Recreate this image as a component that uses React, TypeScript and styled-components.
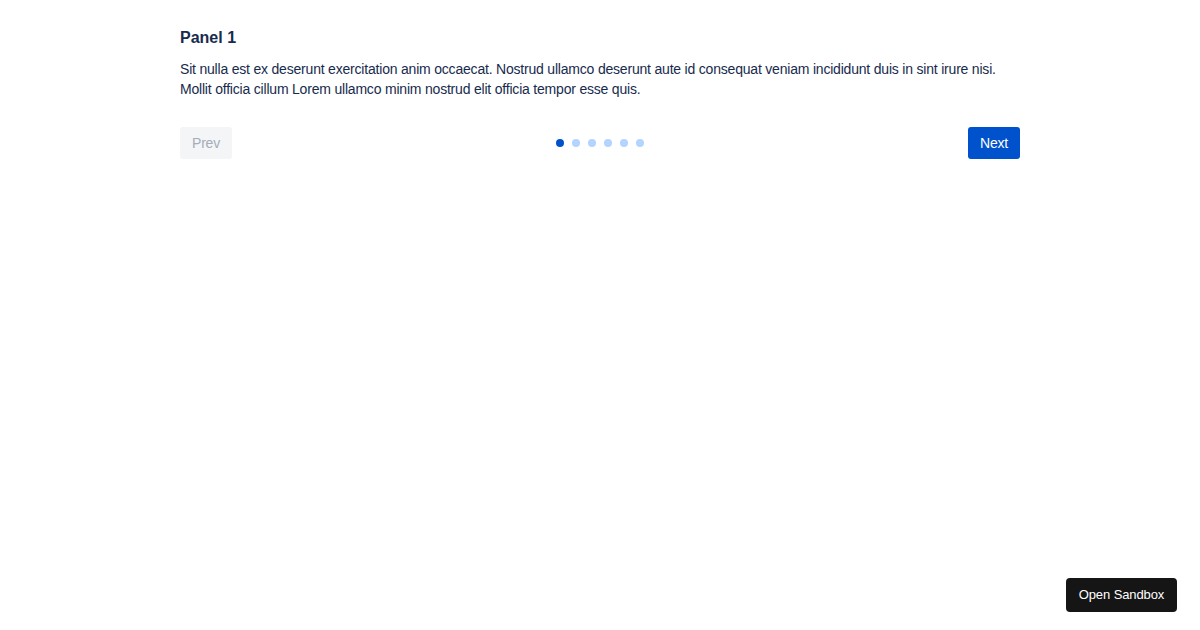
import * as React from "react";
import styled, { createGlobalStyle } from "styled-components";

const GlobalStyle = createGlobalStyle`
  body {
    margin: 0;
    background: #ffffff;
    font-family: "Liberation Sans", Arial, sans-serif;
    color: #172b4d;
  }
`;

const Page = styled.div`
  width: 840px;
  margin: 0 auto;
  padding-top: 28px;
`;

const Title = styled.h4`
  margin: 0;
  font-size: 16px;
  line-height: 20px;
  font-weight: 700;
  color: #172b4d;
`;

const Body = styled.p`
  margin: 11px 0 0;
  font-size: 14px;
  line-height: 20px;
  letter-spacing: -0.2px;
  color: #172b4d;
`;

const Controls = styled.div`
  margin-top: 28px;
  display: flex;
  align-items: center;
  justify-content: space-between;
`;

const NavButton = styled.button<{ primary?: boolean }>`
  font-family: inherit;
  font-size: 14px;
  letter-spacing: -0.2px;
  height: 32px;
  width: 52px;
  padding: 0;
  border: none;
  border-radius: 3px;
  background: ${({ primary }) => (primary ? "#0052cc" : "#f4f5f7")};
  color: ${({ primary }) => (primary ? "#ffffff" : "#a5adba")};
  cursor: ${({ primary }) => (primary ? "pointer" : "not-allowed")};
`;

const Dots = styled.div`
  display: flex;
  gap: 8px;
`;

const Dot = styled.span<{ active?: boolean }>`
  width: 8px;
  height: 8px;
  border-radius: 50%;
  background: ${({ active }) => (active ? "#0052cc" : "#b3d4ff")};
`;

const SandboxButton = styled.button`
  position: fixed;
  right: 23px;
  bottom: 18px;
  height: 34px;
  width: 111px;
  padding: 0;
  border: none;
  border-radius: 4px;
  background: #151515;
  color: #ffffff;
  font-family: "Liberation Sans", Arial, sans-serif;
  font-size: 13px;
  letter-spacing: -0.1px;
  line-height: 32px;
`;

const App: React.FC = () => {
  const [index] = React.useState(0);
  return (
    <>
      <GlobalStyle />
      <Page>
        <Title>Panel 1</Title>
        <Body>
          Sit nulla est ex deserunt exercitation anim occaecat. Nostrud ullamco
          deserunt aute id consequat veniam incididunt duis in sint irure nisi.
          Mollit officia cillum Lorem ullamco minim nostrud elit officia tempor
          esse quis.
        </Body>
        <Controls>
          <NavButton disabled>Prev</NavButton>
          <Dots>
            {[0, 1, 2, 3, 4, 5].map(i => (
              <Dot key={i} active={i === index} />
            ))}
          </Dots>
          <NavButton primary>Next</NavButton>
        </Controls>
      </Page>
      <SandboxButton>Open Sandbox</SandboxButton>
    </>
  );
};

export default App;
